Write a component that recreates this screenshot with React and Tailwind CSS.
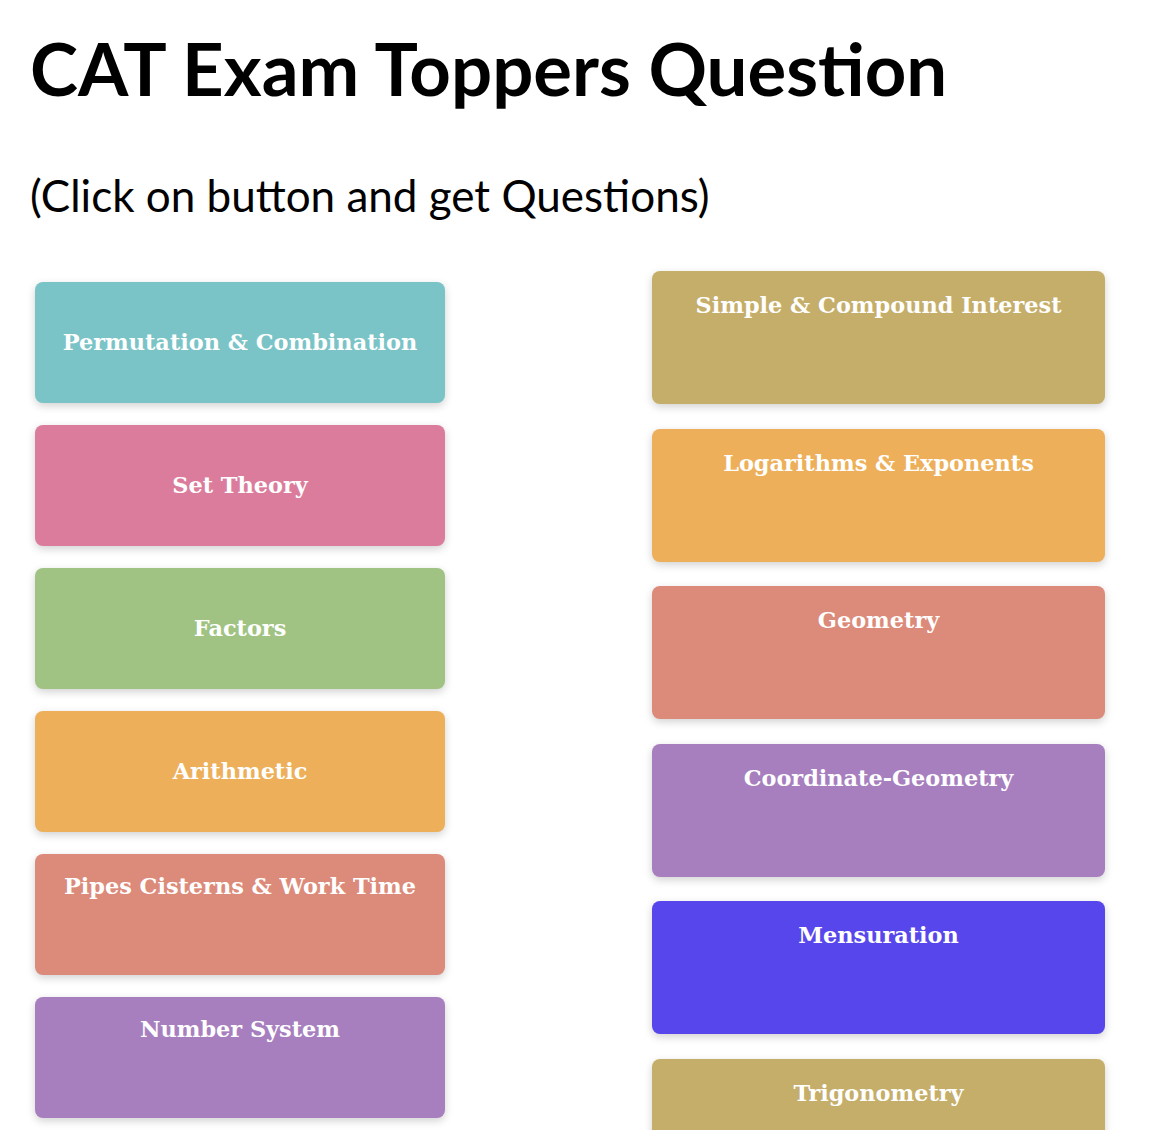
import React from "react"

const left = [
  { name: "Permutation & Combination", bg: "bg-[#7ac3c6]", center: true },
  { name: "Set Theory", bg: "bg-[#db7c9c]", center: true },
  { name: "Factors", bg: "bg-[#a0c383]", center: true },
  { name: "Arithmetic", bg: "bg-[#edaf59]", center: true },
  { name: "Pipes Cisterns & Work Time", bg: "bg-[#dc8a79]", center: false },
  { name: "Number System", bg: "bg-[#a77fbf]", center: false },
]

const right = [
  { name: "Simple & Compound Interest", bg: "bg-[#c5ae69]" },
  { name: "Logarithms & Exponents", bg: "bg-[#edaf59]" },
  { name: "Geometry", bg: "bg-[#dc8a79]" },
  { name: "Coordinate-Geometry", bg: "bg-[#a77fbf]" },
  { name: "Mensuration", bg: "bg-[#5846ed]" },
  { name: "Trigonometry", bg: "bg-[#c5ae69]" },
]

const serif = "font-['DejaVu_Serif',Georgia,serif]"

export default function App() {
  return (
    <div className="h-screen bg-white pl-[30px] pt-[24px] overflow-hidden">
      <h1 className="font-['Lato','Noto_Sans',sans-serif] font-bold text-[72.5px] leading-[88px] text-black">
        CAT Exam Toppers Question
      </h1>
      <p className="mt-[55px] font-['Lato','Noto_Sans',sans-serif] text-[44px] leading-[56px] text-black">
        (Click on button and get Questions)
      </p>

      <div className="mt-[48px] flex gap-[207px]">
        {/* left column */}
        <div className="flex flex-col gap-[22px] pl-[5px] pt-[11px]">
          {left.map((item) => (
            <button
              key={item.name}
              className={`${item.bg} ${item.center ? "items-center" : "items-start pt-[16px]"} flex justify-center w-[410px] h-[121px] shrink-0 rounded-lg shadow-[0_3px_8px_rgba(0,0,0,0.18)] text-white font-bold text-[22.4px] ${serif}`}
            >
              {item.name}
            </button>
          ))}
        </div>

        {/* right column */}
        <div className="flex flex-col gap-[24.5px]">
          {right.map((item) => (
            <button
              key={item.name}
              className={`${item.bg} flex items-start justify-center pt-[18px] w-[453px] h-[133px] shrink-0 rounded-lg shadow-[0_3px_8px_rgba(0,0,0,0.18)] text-white font-bold text-[22.4px] ${serif}`}
            >
              {item.name}
            </button>
          ))}
        </div>
      </div>
    </div>
  )
}
